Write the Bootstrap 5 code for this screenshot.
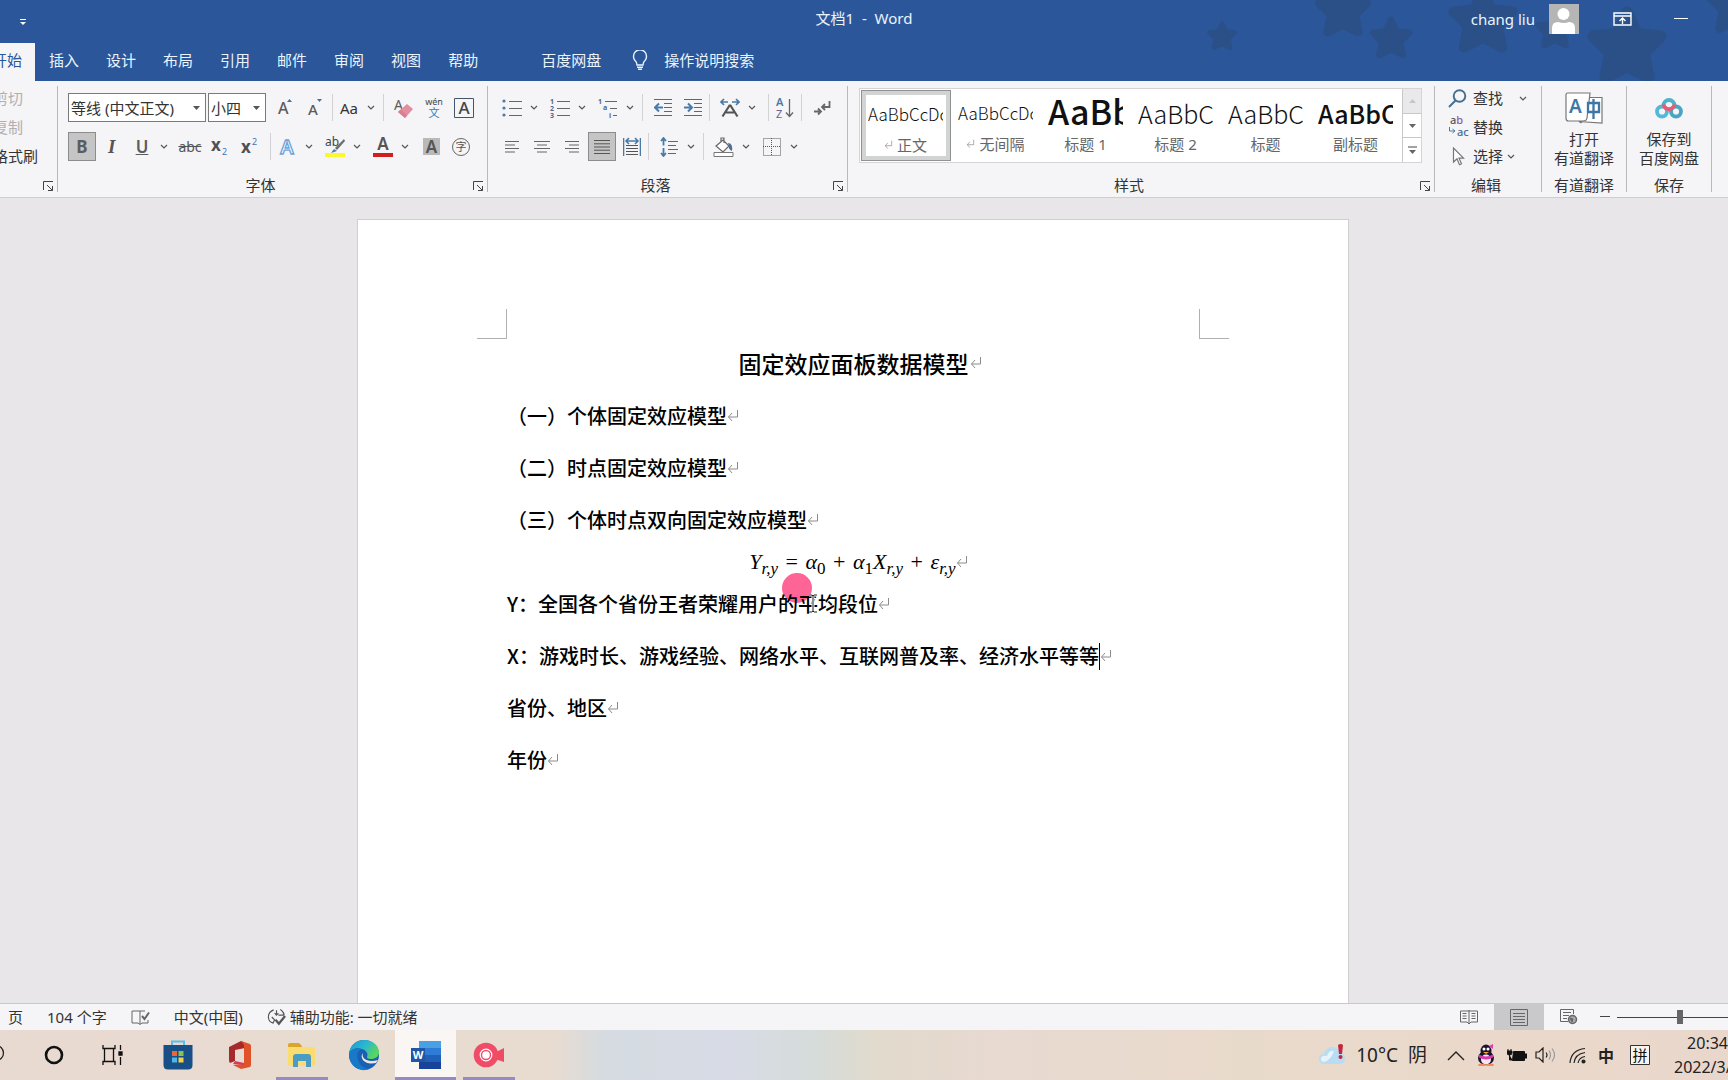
<!DOCTYPE html>
<html lang="zh-CN">
<head>
<meta charset="utf-8">
<meta name="viewport" content="width=device-width, initial-scale=1">
<title>文档1 - Word</title>
<link href="https://cdn.jsdelivr.net/npm/bootstrap@5.3.0/dist/css/bootstrap.min.css" rel="stylesheet">
<style>
:root{--word-blue:#2b579a;--panel:#f5f4f6;--ink:#333;--ico:#5c5c5c;--acc:#4a7ba8}
body{font-family:"Noto Sans","Noto Sans CJK SC",sans-serif;font-size:15px;line-height:20px;color:var(--ink);background:#e8e6e8}
button{font:inherit;color:inherit;background:none;border:0;padding:0}
svg{display:block;flex:none}
.titlebar{height:43px;background:var(--word-blue);color:#eaf4ff}
.stars{left:auto;right:0;top:0;height:81px;width:528px}
.titlebar>*,.tabs>*{position:relative}
.win-controls{gap:14px}
.win-controls .disp{margin-left:20px}
.win-controls .mini{margin-left:28px;margin-right:40px}
.tool{display:flex;align-items:center;justify-content:center;width:28px;height:29px;flex:none}
.tabs{background:var(--word-blue);height:38px}
.tabs ul{gap:1px;margin-left:-21px}
.tabs .nav-link{padding:7px 13px 11px;color:#eaf4ff;line-height:20px;border-radius:0}
.tabs .nav-link.active{background:var(--panel);color:var(--word-blue)}
.ribbon{background:var(--panel);border-bottom:1px solid #cfcdd0;height:117px;padding:5px 0}
.group{border-right:1px solid #b9b8ba;flex:none;display:flex;flex-direction:column;position:relative}
.group footer{text-align:center;line-height:20px;margin-top:auto;color:#333;margin-bottom:-3px}
.launch{position:absolute;right:3px;bottom:0;width:11px;height:11px}
.g-clip{width:58px}.g-font{width:430px}.g-para{width:360px}.g-style{width:587px}.g-edit{width:107px}.g-app{width:85px}
.rows{padding:7px 0 0 10px;display:flex;flex-direction:column;gap:10px}
.tools{display:flex;align-items:center;gap:2px;height:29px}
.chev{width:12px}
.vr-line{width:1px;height:27px;background:#d2d1d3;flex:none}
.pressed{background:#c5c5c5;border:1px solid #8c8c8c}
.box-select{height:29px;border:1px solid #7a7a7a;background:#fff url("data:image/svg+xml,%3Csvg xmlns='http://www.w3.org/2000/svg' viewBox='0 0 7 4'%3E%3Cpath d='M0 0h7L3.5 4z' fill='%23555'/%3E%3C/svg%3E") no-repeat right 5px center/7px 4px;appearance:none;padding:0 2px;color:#333;border-radius:0}
.sel-font{width:138px}.sel-size{width:58px}
.ticon{font-weight:600;color:var(--ico);font-size:17px}
.strike{font-size:14px;color:#555}
.clip-list{margin:2px 0 0 -7px;gap:9px;white-space:nowrap;align-items:flex-start}
.muted{color:#b0afb1}
.gallery{margin:2px 0 0 11px;height:75px;width:563px;border:1px solid #d4d3d5;background:#fff;padding-left:1px}
.style-item{width:90px;height:71px;display:flex;flex-direction:column;padding:0 8px 0 7px;margin-top:1px;color:#666}
.style-item span{height:43px;line-height:46px;overflow:hidden;white-space:nowrap;color:#111;text-align:left;font-family:"Noto Sans CJK SC",sans-serif;width:75px;font-size:17px;font-weight:300}
.style-item em{font-style:normal;line-height:22px;text-align:center;display:flex;justify-content:center;align-items:center;gap:4px}
.style-item.chosen{border:1px solid #8f9290;box-shadow:inset 0 0 0 4px #d2d4d3;padding:0 7px 0 6px}
.style-item .big{font-size:34px;font-weight:500;line-height:41px}
.style-item .mid{font-size:25px;font-weight:300}
.style-item .midb{font-size:25px;font-weight:500}
.gal-scroll{width:19px;border-left:1px solid #c8c7c9}
.gal-scroll button{flex:1;display:flex;align-items:center;justify-content:center;border-bottom:1px solid #c8c7c9}
.gal-scroll button:first-child{background:#e9e8ea}
.gal-scroll button:last-child{border-bottom:0}
.edit-list{padding:2px 0 0 13px;gap:9px}
.edit-list button{display:flex;align-items:center;height:20px}
.edit-list .pic{width:25px;display:flex;align-items:center}
.app-btn{display:flex;flex-direction:column;align-items:center;line-height:19px;padding-top:5px;gap:5px}
.app-btn .pic{height:34px;display:flex;align-items:center}
.canvas{flex:1 1 0;min-height:0;overflow:hidden;padding:21px 22px 0 0;background:#e8e6e8}
.sheet{width:992px;background:#fff;border:1px solid #d0ced0;border-bottom:0;padding:118px 148px 0 149px;position:relative;color:#000;font-size:20px;font-family:"Noto Sans CJK SC",sans-serif;font-weight:500}
.sheet p,.sheet h1{margin:0;line-height:52px;display:flex;align-items:center}
.sheet h1{font-size:23px;font-weight:500;line-height:50px;padding-bottom:2px;justify-content:center;padding-left:14px}
.sheet p.eq{line-height:34px;height:32px;justify-content:center;font-family:"Liberation Serif",serif;font-weight:400;font-size:22px;white-space:pre;padding-left:10px}
.eq sub{font-size:17px;bottom:-5px;line-height:1}
.eq .op{margin:0 2px}
.corner{position:absolute;top:89px;width:30px;height:30px;border-bottom:1px solid #b0b0b0}
.corner.l{left:119px;border-right:1px solid #b0b0b0}
.corner.r{right:119px;border-left:1px solid #b0b0b0}
.caret{width:1px;height:27px;background:#000}
.click-dot{position:absolute;left:424px;top:353px;width:30px;height:30px;border-radius:50%;background:#ff6496;z-index:0}
.sheet p{position:relative;z-index:1}
.ibeam{position:absolute;left:300px;top:16px}
.statusbar{height:27px;background:var(--panel);border-top:1px solid #c9c7ca;flex:none;padding-left:8px;white-space:nowrap}
.view-btn{width:50px;height:26px;display:flex;align-items:center;justify-content:center}
.view-btn.on{background:#c9c8ca}
.zoom-out{margin-left:6px}
.zoombar{appearance:none;width:126px;height:14px;background:linear-gradient(#444,#444) center/100% 1px no-repeat;flex:none;margin:0 -15px 0 7px}
.zoombar::-webkit-slider-thumb{appearance:none;width:6px;height:14px;background:#666}
.taskbar{height:50px;flex:none;background:linear-gradient(90deg,#e8dad0 0,#e8dcd0 32%,#d5dbe1 35%,#d8dbe6 42%,#d5dcda 47%,#e2dacc 51%,#e8d9d1 58%,#e8dacb 72%,#ead9cb 84%,#ead7cb 100%);color:#222}
.task{width:58px;height:50px;display:flex;align-items:center;justify-content:center;position:relative;flex:none}
.task.edge-left{width:25px}
.task.open::after{content:"";position:absolute;left:3px;right:3px;bottom:0;height:3px;background:#968bc0}
.task.front{background:#faf6f3;width:61px;margin-left:2px}
.task.front::after{left:0;right:0}
.tray{font-size:19px;white-space:nowrap}
.clock{font-size:16px;line-height:24px;width:54px;overflow:hidden}
</style>
</head>
<body class="vh-100 d-flex flex-column overflow-hidden">
<svg width="0" height="0" class="position-absolute">
 <defs>
  <symbol id="chev" viewBox="0 0 8 5"><path d="M1 1l3 3 3-3" fill="none" stroke="#555" stroke-width="1.2"/></symbol>
  <symbol id="launch" viewBox="0 0 11 11"><path d="M.5 9V.5H10M4 4l5.500 5.500M9.500 5v4.500H5" fill="none" stroke="#444"/></symbol>
  <symbol id="ret" viewBox="0 0 12 14"><path d="M10.500 1v7H1.500M5 4L1.500 8 5 12" fill="none" stroke="#8c8c8c"/></symbol>
  <path id="star" stroke-linejoin="round" d="M0-28L8-10L28-8L14 6L18 26L0 17L-18 26L-14 6L-28-8L-8-10z"/>
 </defs>
</svg>

<header class="position-relative flex-shrink-0">
 <div class="titlebar d-flex align-items-start justify-content-between">
  <svg class="stars position-absolute" viewBox="0 0 528 81"><g fill="#2b4f86" stroke="#2b4f86" stroke-width="10" opacity=".85"><use href="#star" transform="translate(22 36) scale(.45)"/><use href="#star" transform="translate(143 10) scale(.85)"/><use href="#star" transform="translate(191 38) scale(.65)"/><use href="#star" transform="translate(283 20) scale(1.050)"/><use href="#star" transform="translate(355 30) scale(.6)"/><use href="#star" transform="translate(427 46) scale(1.200)"/><use href="#star" transform="translate(536 5) scale(.9)"/></g></svg>
  <div class="col d-flex"><button class="ms-3 mt-3 ps-1" aria-label="自定义快速访问工具栏"><svg width="6" height="12" viewBox="0 0 6 12"><path d="M0 3.500h6" stroke="#fff"/><path d="M0 6h6L3 9z" fill="#fff"/></svg></button></div>
  <div class="pt-2 text-center">文档1&nbsp; -&nbsp; Word</div>
  <div class="col d-flex align-items-center justify-content-end pt-1 win-controls">
   <span>chang liu</span>
   <svg width="30" height="30" viewBox="0 0 30 30"><path fill="#b5b5b5" d="M0 0h30v30H0z"/><circle cx="14.500" cy="10" r="6" fill="#fff"/><path d="M3 30V24q0-6 6-6 6 2 11 0 6 0 6 6v6z" fill="#fff"/></svg>
   <button class="disp" aria-label="功能区显示选项"><svg width="19" height="14" viewBox="0 0 19 14" fill="none" stroke="#fff" stroke-width="1.400"><path d="M1 1h17v12H1zM1 4h17M9.500 12V6M6.500 9l3-3 3 3"/></svg></button>
   <button class="mini" aria-label="最小化"><svg width="14" height="12" viewBox="0 0 14 12"><path d="M0 5.500h14" stroke="#fff"/></svg></button>
  </div>
 </div>
 <nav class="tabs d-flex">
  <ul class="nav flex-nowrap">
   <li><a class="nav-link active" href="#">开始</a></li><li><a class="nav-link" href="#">插入</a></li><li><a class="nav-link" href="#">设计</a></li><li><a class="nav-link" href="#">布局</a></li><li><a class="nav-link" href="#">引用</a></li><li><a class="nav-link" href="#">邮件</a></li><li><a class="nav-link" href="#">审阅</a></li><li><a class="nav-link" href="#">视图</a></li><li><a class="nav-link" href="#">帮助</a></li><li class="ps-4 ms-2"><a class="nav-link ms-1" href="#">百度网盘</a></li>
   <li class="ms-1"><a class="nav-link d-flex align-items-center" href="#"><svg class="me-3" width="16" height="20" viewBox="0 0 16 20" fill="none" stroke="#eaf4ff" stroke-width="1.400"><path d="M5 15q0-3-2-4.500a6.500 6.500 0 1 1 10 0Q11 12 11 15zM5 17.300h6M6 19.300h4"/></svg>操作说明搜索</a></li>
  </ul>
 </nav>
</header>

<div class="ribbon d-flex flex-shrink-0 overflow-hidden">
 <section class="group g-clip">
  <div class="clip-list d-flex flex-column"><button class="muted">剪切</button><button class="muted">复制</button><button>格式刷</button></div>
  <button class="launch" aria-label="剪贴板"><svg width="11" height="11"><use href="#launch"/></svg></button>
 </section>

 <section class="group g-font">
  <div class="rows">
   <div class="tools">
    <select class="box-select sel-font" aria-label="字体"><option>等线 (中文正文)</option></select>
    <select class="box-select sel-size" aria-label="字号"><option>小四</option></select>
    <button class="tool ms-1" aria-label="增大字号"><svg width="18" height="20" viewBox="0 0 18 20"><text x="1" y="16" font-size="16" font-weight="500" fill="#5c5c5c">A</text><path d="M10 4l2.500-3L15 4z" fill="#4a6f98"/></svg></button>
    <button class="tool" aria-label="减小字号"><svg width="18" height="20" viewBox="0 0 18 20"><text x="1" y="17" font-size="15" font-weight="500" fill="#5c5c5c">A</text><path d="M10 1h5l-2.500 3z" fill="#4a6f98"/></svg></button>
    <i class="vr-line"></i>
    <button class="tool" aria-label="更改大小写">Aa</button><button class="tool chev" aria-label="大小写选项"><svg width="8" height="5"><use href="#chev"/></svg></button>
    <i class="vr-line ms-1"></i>
    <button class="tool ms-1" aria-label="清除格式"><svg width="20" height="22" viewBox="0 0 20 22"><text x="0" y="13" font-size="14" fill="#5c5c5c">A</text><path d="M13 7l6 5-8 9-7-6z" fill="#e38d9e"/><path d="M6.500 12.500l6.500 6-2 2.500-7-6z" fill="#d97d92"/></svg></button>
    <button class="tool" aria-label="拼音指南"><svg width="20" height="26" viewBox="0 0 20 26"><text x="10" y="10" text-anchor="middle" font-size="9" fill="#444">wén</text><text x="10" y="22" text-anchor="middle" font-size="11" fill="#3f76b5">文</text></svg></button>
    <button class="tool" aria-label="字符边框"><svg width="22" height="22" viewBox="0 0 22 22"><path d="M1.500 1.500h19v19h-19z" fill="none" stroke="#44546a"/><text x="11" y="17" text-anchor="middle" font-size="17" font-weight="500" fill="#444">A</text></svg></button>
   </div>
   <div class="tools">
    <button class="tool pressed fw-bold" aria-label="加粗"><span class="ticon fw-bold">B</span></button>
    <button class="tool" aria-label="倾斜"><svg width="14" height="18" viewBox="0 0 14 18"><text x="3" y="15" font-family="Liberation Serif" font-style="italic" font-weight="700" font-size="19" fill="#555">I</text></svg></button>
    <button class="tool" aria-label="下划线"><span class="ticon text-decoration-underline">U</span></button>
    <button class="tool chev" aria-label="下划线选项"><svg width="8" height="5"><use href="#chev"/></svg></button>
    <button class="tool ms-1" aria-label="删除线"><s class="strike">abc</s></button>
    <button class="tool" aria-label="下标"><svg width="18" height="20" viewBox="0 0 18 20"><text x="0" y="14" font-size="17" font-weight="700" fill="#505050">x</text><text x="11" y="18" font-size="9" fill="#3f76b5">2</text></svg></button>
    <button class="tool" aria-label="上标"><svg width="18" height="22" viewBox="0 0 18 22"><text x="0" y="17" font-size="17" font-weight="700" fill="#505050">x</text><text x="11" y="9" font-size="9" fill="#3f76b5">2</text></svg></button>
    <i class="vr-line ms-1"></i>
    <button class="tool" aria-label="文本效果"><svg width="20" height="22" viewBox="0 0 20 22"><text x="10" y="18" text-anchor="middle" font-size="20" font-weight="600" fill="#fff" stroke="#6ba2d8" stroke-width="1.300">A</text></svg></button><button class="tool chev" aria-label="文本效果选项"><svg width="8" height="5"><use href="#chev"/></svg></button>
    <button class="tool ms-1" aria-label="突出显示"><svg width="22" height="22" viewBox="0 0 22 22"><text x="1" y="10" font-size="12" fill="#444">ab</text><path d="M20 3L11 12l2 2 8-9z" fill="#6a6f75"/><path d="M10 13l3 2-6 2z" fill="#4a7ba8"/><path d="M1 17h20v4H1z" fill="#fbf82c"/></svg></button><button class="tool chev" aria-label="突出显示颜色"><svg width="8" height="5"><use href="#chev"/></svg></button>
    <button class="tool ms-1" aria-label="字体颜色"><svg width="20" height="22" viewBox="0 0 20 22"><text x="10" y="14" text-anchor="middle" font-size="17" font-weight="600" fill="#555">A</text><path d="M0 17h20v4H0z" fill="#d11f1f"/></svg></button><button class="tool chev" aria-label="颜色选项"><svg width="8" height="5"><use href="#chev"/></svg></button>
    <button class="tool ms-1" aria-label="字符底纹"><svg width="17" height="17" viewBox="0 0 17 17"><path d="M0 0h17v17H0z" fill="#b9b9b9"/><text x="8.500" y="15" text-anchor="middle" font-size="17" font-weight="600" fill="#555">A</text></svg></button>
    <button class="tool" aria-label="带圈字符"><svg width="20" height="20" viewBox="0 0 20 20"><circle cx="10" cy="10" r="8.500" fill="none" stroke="#666"/><text x="10" y="14" text-anchor="middle" font-size="11" fill="#555">字</text></svg></button>
   </div>
  </div>
  <footer class="pe-4">字体</footer>
  <button class="launch" aria-label="字体设置"><svg width="11" height="11"><use href="#launch"/></svg></button>
 </section>

 <section class="group g-para">
  <div class="rows">
   <div class="tools">
    <button class="tool" aria-label="项目符号"><svg width="20" height="18" viewBox="0 0 20 18"><g fill="#4a7ba8"><circle cx="2" cy="2" r="1.600"/><circle cx="2" cy="9" r="1.600"/><circle cx="2" cy="16" r="1.600"/></g><path d="M7 2.500h13M7 9.500h13M7 16.500h13" stroke="#666"/></svg></button><button class="tool chev" aria-label="符号选项"><svg width="8" height="5"><use href="#chev"/></svg></button>
    <button class="tool ms-1" aria-label="编号"><svg width="20" height="20" viewBox="0 0 20 20"><g font-size="7" font-weight="700" fill="#4d6a8a"><text y="6">1</text><text y="13">2</text><text y="20">3</text></g><path d="M7 3.500h13M7 10.500h13M7 17.500h13" stroke="#666"/></svg></button><button class="tool chev" aria-label="编号选项"><svg width="8" height="5"><use href="#chev"/></svg></button>
    <button class="tool ms-1" aria-label="多级列表"><svg width="20" height="20" viewBox="0 0 20 20"><g font-size="7" font-weight="700" fill="#4d6a8a"><text y="6">1</text><text x="5" y="12">a</text><text x="11" y="20">i</text></g><path d="M7 3.500h12M12 10.500h7M15 17.500h4" stroke="#666"/></svg></button><button class="tool chev" aria-label="多级选项"><svg width="8" height="5"><use href="#chev"/></svg></button>
    <i class="vr-line ms-1"></i>
    <button class="tool ms-1" aria-label="减少缩进"><svg width="18" height="17" viewBox="0 0 18 17"><path d="M0 .5h18M10 4.500h8M10 8.500h8M10 12.500h8M0 16.500h18" stroke="#666"/><path d="M9 8.500H1M5 4.500L1 8.500l4 4" fill="none" stroke="#4a7ba8" stroke-width="2"/></svg></button>
    <button class="tool" aria-label="增加缩进"><svg width="18" height="17" viewBox="0 0 18 17"><path d="M0 .5h18M10 4.500h8M10 8.500h8M10 12.500h8M0 16.500h18" stroke="#666"/><path d="M0 8.500h8M4 4.500l4 4-4 4" fill="none" stroke="#4a7ba8" stroke-width="2"/></svg></button>
    <i class="vr-line"></i>
    <button class="tool ms-1" aria-label="中文版式"><svg width="20" height="20" viewBox="0 0 20 20"><path d="M1 4h7M4 1L1 4l3 3M19 4h-7M16 1l3 3-3 3" fill="none" stroke="#4a7ba8" stroke-width="1.700"/><path d="M2.500 18.500L9.500 7.500h1l7 11M6 14.500h8" fill="none" stroke="#555" stroke-width="2.200"/></svg></button><button class="tool chev" aria-label="版式选项"><svg width="8" height="5"><use href="#chev"/></svg></button>
    <i class="vr-line ms-2"></i>
    <button class="tool" aria-label="排序"><svg width="18" height="24" viewBox="0 0 18 24"><text x="0" y="10" font-size="11" font-weight="600" fill="#4a7ba8">A</text><text x="0" y="22" font-size="11" fill="#6a6390">Z</text><path d="M13.500 3v17M10 16.500l3.500 4 3.500-4" fill="none" stroke="#666" stroke-width="1.300"/></svg></button>
    <i class="vr-line"></i>
    <button class="tool ms-1" aria-label="显示编辑标记"><svg width="18" height="16" viewBox="0 0 18 16"><path d="M16.500 1v6H9M12 4L9 7l3 3M1 11.500h7M5 8.500l3 3-3 3" fill="none" stroke="#666" stroke-width="1.800"/></svg></button>
   </div>
   <div class="tools">
    <button class="tool" aria-label="左对齐"><svg width="14" height="12" viewBox="0 0 14 12"><path d="M0 .5h14M0 4h10M0 7.500h14M0 11h10" stroke="#666"/></svg></button>
    <button class="tool" aria-label="居中"><svg width="16" height="12" viewBox="0 0 16 12"><path d="M0 .5h16M3 4h10M0 7.500h16M3 11h10" stroke="#666"/></svg></button>
    <button class="tool" aria-label="右对齐"><svg width="14" height="12" viewBox="0 0 14 12"><path d="M0 .5h14M4 4h10M0 7.500h14M4 11h10" stroke="#666"/></svg></button>
    <button class="tool pressed" aria-label="两端对齐"><svg width="16" height="14" viewBox="0 0 16 14"><path d="M0 .5h16M0 3.800h16M0 7h16M0 10.200h16M0 13.500h16" stroke="#555"/></svg></button>
    <button class="tool" aria-label="分散对齐"><svg width="18" height="20" viewBox="0 0 18 20"><path d="M.5 1v18M17.500 1v18M3 4h12M6 1L3 4l3 3M12 1l3 3-3 3" fill="none" stroke="#4a7ba8" stroke-width="1.600"/><path d="M3 8.500h12M3 11.500h12M3 14.500h12M3 17.500h12" stroke="#555"/></svg></button>
    <i class="vr-line"></i>
    <button class="tool ms-1" aria-label="行距"><svg width="18" height="20" viewBox="0 0 18 20"><path d="M3.500 1.500v7M1 4l2.500-3L6 4M3.500 11v7M1 16l2.500 3L6 16" fill="none" stroke="#4a7ba8" stroke-width="1.800"/><path d="M8 4.500h10M8 8.500h8M8 12.500h10M8 16.500h8" stroke="#666"/></svg></button><button class="tool chev" aria-label="行距选项"><svg width="8" height="5"><use href="#chev"/></svg></button>
    <i class="vr-line ms-1"></i>
    <button class="tool ms-1" aria-label="底纹"><svg width="22" height="20" viewBox="0 0 22 20"><path d="M3 9l7-6 6 6-6 6zM8 5V1h3v5" fill="#fff" stroke="#666" stroke-width="1.200"/><path d="M15 6q5 0 4 8-4-2-3-5z" fill="#4a6f98"/><path d="M1 15.500h19v4H1z" fill="#fff" stroke="#777"/></svg></button><button class="tool chev" aria-label="底纹选项"><svg width="8" height="5"><use href="#chev"/></svg></button>
    <button class="tool ms-1" aria-label="边框"><svg width="18" height="18" viewBox="0 0 18 18"><path d="M.5.500h17v17H.5zM8.500 0v18M0 8.500h18" fill="none" stroke="#555" stroke-dasharray="1 1"/></svg></button><button class="tool chev" aria-label="边框选项"><svg width="8" height="5"><use href="#chev"/></svg></button>
   </div>
  </div>
  <footer class="pe-4">段落</footer>
  <button class="launch" aria-label="段落设置"><svg width="11" height="11"><use href="#launch"/></svg></button>
 </section>

 <section class="group g-style">
  <div class="gallery d-flex">
   <button class="style-item chosen"><span>AaBbCcDc</span><em><svg width="9" height="10" viewBox="0 0 12 14"><use href="#ret"/></svg>正文</em></button>
   <button class="style-item"><span>AaBbCcDc</span><em><svg width="9" height="10" viewBox="0 0 12 14"><use href="#ret"/></svg>无间隔</em></button>
   <button class="style-item"><span class="big">AaBb</span><em>标题 1</em></button>
   <button class="style-item"><span class="mid">AaBbC</span><em>标题 2</em></button>
   <button class="style-item"><span class="mid">AaBbC</span><em>标题</em></button>
   <button class="style-item"><span class="midb">AaBbC</span><em>副标题</em></button>
   <div class="gal-scroll d-flex flex-column ms-auto">
    <button aria-label="上一行"><svg width="7" height="4" viewBox="0 0 7 4"><path d="M0 4h7L3.500 0z" fill="#c6c5c7"/></svg></button>
    <button aria-label="下一行"><svg width="7" height="4" viewBox="0 0 7 4"><path d="M0 0h7L3.500 4z" fill="#666"/></svg></button>
    <button aria-label="其他样式"><svg width="9" height="8" viewBox="0 0 9 8"><path d="M0 1h9" stroke="#666" stroke-width="1.200"/><path d="M1 4h7L4.500 8z" fill="#666"/></svg></button>
   </div>
  </div>
  <footer class="pe-4">样式</footer>
  <button class="launch" aria-label="样式窗格"><svg width="11" height="11"><use href="#launch"/></svg></button>
 </section>

 <section class="group g-edit">
  <div class="edit-list d-flex flex-column">
   <button><span class="pic"><svg width="19" height="19" viewBox="0 0 19 19" fill="none" stroke="#44708f" stroke-width="1.900"><circle cx="11.500" cy="7" r="5.800"/><path d="M7.500 11.500L1 18"/></svg></span>查找<svg class="ms-3" width="8" height="5"><use href="#chev"/></svg></button>
   <button><span class="pic"><svg width="22" height="22" viewBox="0 0 22 22"><text x="2" y="8" font-size="11" font-weight="500" fill="#555">a<tspan fill="#8a5aa8">b</tspan></text><path d="M1.500 11v4H7M4.500 13l2.500 2-2.500 2" fill="none" stroke="#4a7ba8"/><text x="9" y="20" font-size="11" font-weight="500" fill="#4a6f98">ac</text></svg></span>替换</button>
   <button><span class="pic ps-1"><svg width="13" height="19" viewBox="0 0 13 19"><path d="M1.500 1v14l3.500-3.300 2.500 6 2-1-2.500-5.500h4.500z" fill="#fff" stroke="#777" stroke-width="1.200"/></svg></span>选择<svg class="ms-1" width="8" height="5"><use href="#chev"/></svg></button>
  </div>
  <footer class="pe-1">编辑</footer>
 </section>

 <section class="group g-app">
  <button class="app-btn"><span class="pic"><svg width="38" height="32" viewBox="0 0 38 32"><path d="M14 29.500L37 31V5.500H25" fill="#fff" stroke="#777" stroke-width="1.200"/><path d="M2.500 1H25l-3 25q-.5 3-4 3H3.500Q1 29 1 26V3q0-2 1.500-2z" fill="#fff" stroke="#777" stroke-width="1.200"/><path d="M13 29.500h5l-2 2z" fill="#777"/><text x="4" y="21" font-size="19" font-weight="600" fill="#3f76a8">A</text><path d="M23 11h11v9H23zM28.500 7v20" fill="none" stroke="#3f76a8" stroke-width="2.300"/></svg></span><span>打开<br>有道翻译</span></button>
  <footer>有道翻译</footer>
 </section>
 <section class="group g-app">
  <button class="app-btn"><span class="pic"><svg width="28" height="24" viewBox="0 0 28 24" fill="none" stroke-width="3.800"><circle cx="7" cy="15.500" r="5" stroke="#54b8d8"/><circle cx="21" cy="15.500" r="5" stroke="#4aa5c4"/><path d="M8.500 9.500a5.500 5.500 0 1 1 11 0" stroke="#4cb4ca"/><path d="M8.500 8.500a5.600 5.600 0 0 0 11 0" stroke="#ea5a72"/></svg></span><span>保存到<br>百度网盘</span></button>
  <footer>保存</footer>
 </section>
</div>

<main class="canvas d-flex justify-content-center">
 <article class="sheet">
  <i class="corner l"></i><i class="corner r"></i><i class="click-dot"></i>
  <h1>固定效应面板数据模型<svg width="14" height="14"><use href="#ret"/></svg></h1>
  <p>（一）个体固定效应模型<svg width="12" height="14"><use href="#ret"/></svg></p>
  <p>（二）时点固定效应模型<svg width="12" height="14"><use href="#ret"/></svg></p>
  <p>（三）个体时点双向固定效应模型<svg width="12" height="14"><use href="#ret"/></svg></p>
  <p class="eq"><span><i>Y<sub>r,y</sub></i> <span class="op">=</span> <i>α</i><sub>0</sub> <span class="op">+</span> <i>α</i><sub>1</sub><i>X<sub>r,y</sub></i> <span class="op">+</span> <i>ε<sub>r,y</sub></i></span><svg width="12" height="14"><use href="#ret"/></svg></p>
  <p>Y：全国各个省份王者荣耀用户的平均段位<svg width="12" height="14"><use href="#ret"/></svg><svg class="ibeam" width="12" height="19" viewBox="0 0 12 19"><path d="M2 1h3l1 1 1-1h3M6 2v15M2 18h3l1-1 1 1h3" fill="none" stroke="#fff" stroke-width="3"/><path d="M2 1h3l1 1 1-1h3M6 2v15M2 18h3l1-1 1 1h3" fill="none" stroke="#222"/></svg></p>
  <p>X：游戏时长、游戏经验、网络水平、互联网普及率、经济水平等等<i class="caret"></i><svg width="12" height="14"><use href="#ret"/></svg></p>
  <p>省份、地区<svg width="12" height="14"><use href="#ret"/></svg></p>
  <p>年份<svg width="12" height="14"><use href="#ret"/></svg></p>
 </article>
</main>

<footer class="statusbar d-flex align-items-center">
 <button>页</button>
 <button class="ms-4">104 个字</button>
 <button class="ms-4" aria-label="校对"><svg width="19" height="17" viewBox="0 0 19 17" fill="none" stroke="#666"><path d="M9 2H1v12h6l2 1.500L11 14h6v-3M9 2v13M9 2h5"/><path d="M11 7l2.500 3L18 3.500" stroke-width="2"/></svg></button>
 <button class="ms-4">中文(中国)</button>
 <button class="ms-4 d-flex align-items-center"><svg class="me-1" width="19" height="20" viewBox="0 0 20 20" fill="none" stroke="#555"><path d="M7 2.500Q1 5 1.500 10.500T7 16M5 10l3 3-2 4M10 3v5M8 6l2 2 2-2M14 2q4 3 4 6M12 8h6" stroke-width="1.200"/><path d="M9 13l3.500 4L19 9" stroke-width="2.400"/></svg>辅助功能: 一切就绪</button>
 <button class="view-btn ms-auto" aria-label="阅读视图"><svg width="18" height="16" viewBox="0 0 18 16" fill="none" stroke="#666"><path d="M9 2H.5v11H7l2 2 2-2h6.500V2zM9 1v14M2.500 4.500h4M2.500 7h4M2.500 9.500h4M11.500 4.500h4M11.500 7h4M11.500 9.500h4"/></svg></button>
 <button class="view-btn on" aria-label="页面视图"><svg width="18" height="17" viewBox="0 0 18 17" fill="none" stroke="#666"><path d="M.5.500h17v16H.5zM3 4.500h12M3 7.500h12M3 10.500h12M3 13.500h12"/></svg></button>
 <button class="view-btn" aria-label="Web 版式视图"><svg width="18" height="16" viewBox="0 0 18 16" fill="none" stroke="#666"><path d="M8 12.500H.5V.500h13V5M3 3.500h8M3 6.500h6M3 9.500h4"/><circle cx="12.500" cy="10.500" r="4" fill="#aaa" stroke-width="1.500"/><path d="M10 9l3 1-1 3z" fill="#666"/></svg></button>
 <button class="zoom-out" aria-label="缩小"><svg width="10" height="12" viewBox="0 0 10 12"><path d="M0 5.500h10" stroke="#444"/></svg></button>
 <input class="zoombar" type="range" min="10" max="190" value="100" aria-label="显示比例">
</footer>

<footer class="taskbar d-flex align-items-center overflow-hidden">
 <button class="task edge-left" aria-label="搜索"><svg width="25" height="20" viewBox="0 0 25 20"><circle cx="-4" cy="8" r="7.500" fill="none" stroke="#222" stroke-width="1.300"/></svg></button>
 <button class="task" aria-label="Cortana"><svg width="20" height="20" viewBox="0 0 20 20"><circle cx="10" cy="10" r="8" fill="none" stroke="#111" stroke-width="2.600"/></svg></button>
 <button class="task" aria-label="任务视图"><svg width="21" height="20" viewBox="0 0 21 20" fill="none" stroke="#111" stroke-width="1.300"><path d="M1 0v3.500h12V0M1 20v-3.500h12V20M2.500 3.500h9v13h-9zM18.500 0v5M18.500 12v8"/><path d="M17 7h3v3h-3z" fill="#111"/></svg></button>
 <button class="task ms-2" aria-label="Microsoft Store"><svg width="30" height="30" viewBox="0 0 30 30"><path d="M9 6V1.500h12V6" fill="none" stroke="#59bfe8" stroke-width="2"/><path d="M.5 5h29v20q0 4.500-4.500 4.500H5Q.5 29.500.5 25z" fill="#174f86"/><path d="M9 11h5v5H9z" fill="#e9663f"/><path d="M15.500 11h5v5h-5z" fill="#8cc152"/><path d="M9 17.500h5v5H9z" fill="#4db5e8"/><path d="M15.500 17.500h5v5h-5z" fill="#f7cf46"/></svg></button>
 <button class="task ms-1" aria-label="Office"><svg width="24" height="30" viewBox="0 0 24 30"><path d="M1 7L13 1l4 2v5L7 10v11l-5 2q-1-1-1-3z" fill="#a52a2c"/><path d="M13 1l9 3q1 1 1 2v19q0 1-1 2l-9 2-8-4 11-1V5z" fill="#e05228"/><path d="M5 24l11 1v-2L7 21z" fill="#d83b5a"/></svg></button>
 <button class="task open ms-1" aria-label="文件资源管理器"><svg width="28" height="26" viewBox="0 0 28 26"><path d="M0 3q0-2 2-2h9l3 3v8H0z" fill="#d9a52c"/><path d="M0 5h25q2 0 2 2v17H0z" fill="#fbdc6e"/><path d="M5 25V15q0-3 3-3h12q3 0 3 3v10h-5v-6h-8v6z" fill="#4b9cc4"/></svg></button>
 <button class="task ms-1" aria-label="Microsoft Edge"><svg width="32" height="32" viewBox="0 0 32 32"><defs><linearGradient id="eg" x1="0" y1="0" x2="1" y2=".5"><stop offset="0" stop-color="#1c96d4"/><stop offset=".55" stop-color="#2bb8cf"/><stop offset="1" stop-color="#5ad65c"/></linearGradient></defs><circle cx="16" cy="16" r="15" fill="#1760b3"/><path d="M1 15C2 6 8 1 16 1c9 0 15 6 15 12 0 5-4 7-8 7-3 0-4-1-4-2 1-2 1-6-5-8C8 8 2 11 1 15z" fill="url(#eg)"/><path d="M1 15c1-4 7-7 12-5-3 2-5 6-3 11 2 6 7 9 12 9C11 34 1 27 1 15z" fill="#1a78c8"/><path d="M15 14c-2 5 4 10 15 7l-2 3c-4 1-12 1-14-5-1-2 0-4 1-5z" fill="#f0e6dd"/></svg></button>
 <button class="task open front" aria-label="Word"><svg width="30" height="28" viewBox="0 0 30 28"><path d="M8 0h22v7H8z" fill="#49a0e4"/><path d="M8 7h22v7H8z" fill="#2e7cd6"/><path d="M8 14h22v7H8z" fill="#2160b8"/><path d="M8 21h22v7H8z" fill="#17449a"/><path d="M0 7h14v14H0z" fill="#1f57a6"/><text x="7" y="18" text-anchor="middle" font-size="11" font-weight="700" fill="#fff">W</text></svg></button>
 <button class="task open ms-1" aria-label="录屏"><svg width="32" height="26" viewBox="0 0 32 26"><path d="M20 9h5l6-3v14l-6-2h-5z" fill="#ee4c62"/><circle cx="13" cy="13" r="12.300" fill="#f04c68"/><circle cx="13" cy="13" r="5.800" fill="none" stroke="#fff" stroke-width="1.200"/><circle cx="13" cy="13" r="3.800" fill="#fff"/></svg></button>
 <div class="tray d-flex align-items-center ms-auto">
  <button class="d-flex align-items-center"><svg class="me-2" width="30" height="24" viewBox="0 0 30 24"><path d="M7 21q-6 0-6-5t5-5q2-7 8-7t8 6q5 1 5 6t-6 5z" fill="#b9dcf2"/><path d="M6 19q-4-1-3-4t6-2q2-6 7-5-3 9-10 11z" fill="#e6f3fb"/><path d="M20 2q3-2 5 0l-1 9h-3z" fill="#c0283e"/><circle cx="22.500" cy="14" r="2" fill="#c0283e"/></svg><span>10°C&nbsp; 阴</span></button>
  <button class="ms-3 ps-1" aria-label="显示隐藏的图标"><svg width="18" height="12" viewBox="0 0 18 12"><path d="M1 11l8-8 8 8" fill="none" stroke="#222" stroke-width="1.400"/></svg></button>
  <button class="ms-2 ps-1" aria-label="QQ"><svg width="18" height="22" viewBox="0 0 18 22"><ellipse cx="9" cy="14" rx="8" ry="7" fill="#1d1530"/><ellipse cx="9" cy="7" rx="5.500" ry="6.500" fill="#1d1530"/><ellipse cx="9" cy="15.500" rx="5" ry="5" fill="#f3e6f0"/><path d="M2 10.500q7 4 14 0v3q-7 4-14 0z" fill="#d838a8"/><circle cx="7" cy="5" r="1.500" fill="#fff"/><circle cx="11" cy="5" r="1.500" fill="#fff"/><path d="M6 8h6l-3 2z" fill="#f5a623"/><path d="M12 2l4-2v5z" fill="#e23bb0"/><ellipse cx="5" cy="21" rx="4" ry="1.300" fill="#ef8a5a"/><ellipse cx="13" cy="21" rx="4" ry="1.300" fill="#ef8a5a"/></svg></button>
  <button class="ms-2 ps-1" aria-label="电池"><svg width="20" height="14" viewBox="0 0 20 14"><path d="M6.500 3.500h11v9h-12z" fill="#111" stroke="#111"/><path d="M18 6h2v4h-2zM0 3h5v2q0 2-2.500 2T0 5zM1 1v2M4 1v2M2.500 7v5h3" stroke="#111" fill="#111"/></svg></button>
  <button class="ms-2" aria-label="音量"><svg width="22" height="16" viewBox="0 0 22 16" fill="none" stroke="#222" stroke-width="1.200"><path d="M1 5h3l4-4v14l-4-4H1zM11 5.500q2 2.500 0 5"/><path d="M14 3.500q3 4.500 0 9M17 1.500q5 6.500 0 13" stroke="#999"/></svg></button>
  <button class="ms-2 ps-1" aria-label="网络"><svg width="17" height="17" viewBox="0 0 17 17" fill="none" stroke="#222" stroke-width="1.200"><path d="M1 16Q2 3 16 1.500M5 16Q6 7 16 5.500M9 16q1-5.500 7-6.500"/><circle cx="14.500" cy="14.500" r="1.500" fill="#222"/></svg></button>
  <button class="ms-2 ps-1" aria-label="输入法"><span class="fs-6 fw-bold">中</span></button>
  <button class="ms-3" aria-label="拼音"><svg width="20" height="20" viewBox="0 0 20 20"><path d="M.5.500h19v19H.5z" fill="#f8f3ee" stroke="#333"/><text x="10" y="15.500" text-anchor="middle" font-size="15" fill="#111">拼</text></svg></button>
  <div class="clock ms-4"><div class="text-end">20:34</div><div>2022/3/</div></div>
 </div>
</footer>
<script src="https://cdn.jsdelivr.net/npm/bootstrap@5.3.0/dist/js/bootstrap.bundle.min.js"></script>
</body>
</html>
